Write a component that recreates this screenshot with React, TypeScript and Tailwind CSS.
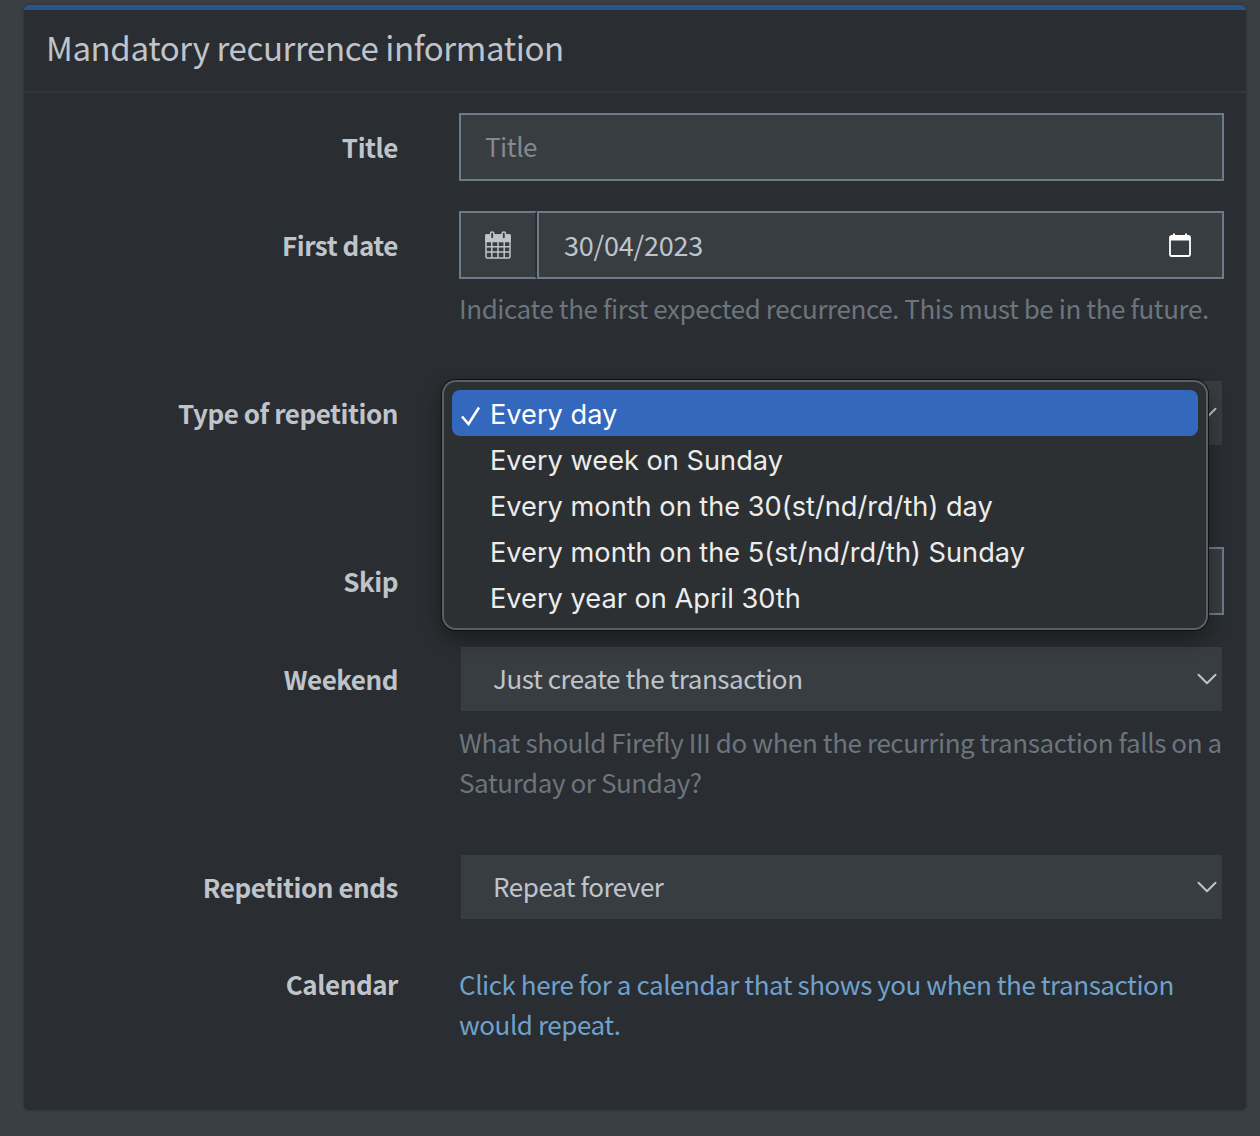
import { ChevronDown } from "lucide-react";

const sans = "font-['Noto_Sans_CJK_SC','Noto_Sans',sans-serif]";

function Label({ children }: { children: string }) {
  return (
    <div className="w-[374px] text-right text-[26px] font-bold leading-[40px] tracking-[-0.45px] text-[#bfc4ca]">
      {children}
    </div>
  );
}

function Help({ children, top }: { children?: React.ReactNode; top: string }) {
  return (
    <div className={`${top} mb-[51px] min-h-[40px] text-[26px] leading-[40px] tracking-[-0.42px] text-[#6c757d]`}>
      {children}
    </div>
  );
}

function SelectBox({ value }: { value?: string }) {
  return (
    <div className="mx-[2px] my-[2px] flex h-[64px] items-center justify-between bg-[#383d42] pb-[4px] pl-[32px] text-[26px] tracking-[-0.45px] text-[#bfc4ca]">
      <span>{value}</span>
      <ChevronDown className="mt-[4px] mr-[-2px] h-[34px] w-[34px] text-[#bfc4ca]" strokeWidth={1.4} />
    </div>
  );
}

const options = [
  "Every day",
  "Every week on Sunday",
  "Every month on the 30(st/nd/rd/th) day",
  "Every month on the 5(st/nd/rd/th) Sunday",
  "Every year on April 30th",
];

function GridCalendar() {
  return (
    <svg viewBox="0 0 26 28" className="h-[28px] w-[26px]" fill="none" stroke="#bfc4ca" strokeWidth="1.5">
      <rect x="1" y="4" width="24" height="23" rx="1.5" />
      <path d="M1 4h24v6.5H1z" fill="#bfc4ca" />
      <path d="M1 15.7h24M1 21h24M6.8 10.5V27M13 10.5V27M19.2 10.5V27" />
      <rect x="5.5" y="1" width="3.4" height="7" rx="1.7" fill="#383d42" />
      <rect x="17.1" y="1" width="3.4" height="7" rx="1.7" fill="#383d42" />
    </svg>
  );
}

function NativeCalendar() {
  return (
    <svg viewBox="0 0 22 24" className="h-[24px] w-[22px]" fill="none">
      <path d="M5 0.5v4M17 0.5v4" stroke="#fff" strokeWidth="2" />
      <rect x="1" y="3" width="20" height="20" rx="1.5" stroke="#fff" strokeWidth="1.8" />
      <rect x="1" y="3" width="20" height="4.5" fill="#fff" />
    </svg>
  );
}

function Tick() {
  return (
    <svg viewBox="0 0 22 22" className="absolute left-[7px] h-[22px] w-[22px]" fill="none">
      <path d="M3 12.5 9.5 20 20 3.5" stroke="#fff" strokeWidth="2.6" />
    </svg>
  );
}

export default function App() {
  return (
    <div className={`min-h-[1136px] bg-[#393f43] pt-[5px] pl-[24px] pr-[14px] ${sans}`}>
      <div className="h-[1105px] rounded-[5px] border-t-[5px] border-[#27558a] bg-[#2a2d31] shadow-[0_0_3px_rgba(0,0,0,0.3)]">
        <div className="flex h-[83px] items-center border-b-2 border-[#33383c] pl-[22px] pb-[6px] text-[33px] tracking-[-0.38px] text-[#bfc4ca]">
          Mandatory recurrence information
        </div>

        <div className="pt-[20px]">
          <div className="mb-[30px] flex items-center">
            <Label>Title</Label>
            <input
              placeholder="Title"
              className="ml-[61px] h-[68px] w-[765px] border-2 border-[#6b7b8c] bg-[#383d42] px-[24px] pb-[4px] text-[26px] tracking-[-0.45px] text-[#bfc4ca] outline-none placeholder:text-[#82898f]"
            />
          </div>

          <div className="flex">
            <div className="flex h-[68px] items-center">
              <Label>First date</Label>
            </div>
            <div className="ml-[61px] w-[765px]">
              <div className="flex h-[68px]">
                <div className="flex w-[78px] items-center justify-center border-2 border-[#6b7b8c] border-r-[#2a2d31] bg-[#383d42]">
                  <GridCalendar />
                </div>
                <div className="flex flex-1 items-center justify-between border-2 border-[#6b7b8c] bg-[#383d42] pl-[25px] pr-[31px] text-[27px] tracking-[-0.2px] text-[#bfc4ca]">
                  <span>30/04/2023</span>
                  <NativeCalendar />
                </div>
              </div>
              <Help top="mt-[9px]">Indicate the first expected recurrence. This must be in the future.</Help>
            </div>
          </div>

          <div className="flex">
            <div className="flex h-[68px] items-center">
              <Label>Type of repetition</Label>
            </div>
            <div className="relative ml-[61px] w-[765px]">
              <SelectBox />
              <Help top="mt-[11px]" />
              <div className="absolute left-[-17px] top-[1px] w-[766px] rounded-[14px] border-2 border-[#5c5f63] bg-[#2d3033] p-[8px] font-['Inter',sans-serif] text-[27.2px] text-[#ececec] shadow-[0_0_0_1px_#111,0_8px_20px_rgba(0,0,0,0.4)]">
                {options.map((o, i) => (
                  <div
                    key={o}
                    className={`relative flex h-[46px] items-center rounded-[8px] pl-[38px] pt-[4px] ${i === 0 ? "bg-[#3368bd] text-white" : ""}`}
                  >
                    {i === 0 && <Tick />}
                    {o}
                  </div>
                ))}
              </div>
            </div>
          </div>

          <div className="mb-[30px] flex items-center">
            <Label>Skip</Label>
            <div className="ml-[61px] h-[68px] w-[765px] border-2 border-[#6b7b8c] bg-[#383d42]" />
          </div>

          <div className="flex">
            <div className="flex h-[68px] items-center">
              <Label>Weekend</Label>
            </div>
            <div className="ml-[61px] w-[765px]">
              <SelectBox value="Just create the transaction" />
              <Help top="mt-[11px]">What should Firefly III do when the recurring transaction falls on a Saturday or Sunday?</Help>
            </div>
          </div>

          <div className="mb-[30px] flex">
            <div className="flex h-[68px] items-center">
              <Label>Repetition ends</Label>
            </div>
            <div className="ml-[61px] w-[765px]">
              <SelectBox value="Repeat forever" />
            </div>
          </div>

          <div className="flex pt-[13px]">
            <Label>Calendar</Label>
            <a className="ml-[61px] w-[765px] text-[26px] leading-[40px] tracking-[-0.45px] text-[#6ea1cc]">
              Click here for a calendar that shows you when the transaction would repeat.
            </a>
          </div>
        </div>
      </div>
    </div>
  );
}
